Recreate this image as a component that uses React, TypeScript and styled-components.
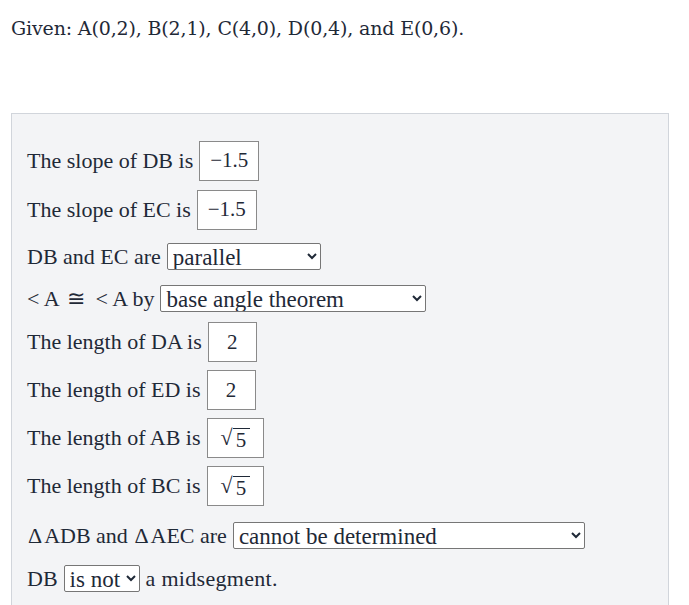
import React from "react";
import styled, { createGlobalStyle } from "styled-components";

const Global = createGlobalStyle`
  html, body { margin: 0; padding: 0; background: #ffffff; }
  body { font-family: "Liberation Serif", "DejaVu Serif", serif; color: #1f2937; }
`;

const Page = styled.div`
  padding: 14px 0 0 11px;
  width: 658px;
`;

const Title = styled.h1`
  margin: 0;
  font-family: "DejaVu Serif", "Liberation Serif", serif;
  font-weight: normal;
  font-size: 19px;
  line-height: 28px;
  color: #1f2937;
  letter-spacing: -0.15px;
`;

const Panel = styled.div`
  margin-top: 71px;
  background: #f3f4f6;
  border: 1px solid #d1d5db;
  padding: 22px 16px 20px 15px;
  height: 520px;
  box-sizing: border-box;
`;

const Row = styled.div<{ $h: number }>`
  display: flex;
  align-items: center;
  height: ${(p) => p.$h}px;
  font-size: 22px;
  white-space: nowrap;
`;

const Label = styled.span`
  margin-right: 6px;
`;

const After = styled.span`
  margin-left: 6px;
  letter-spacing: 0.3px;
`;

const Delta = styled.span`
  padding: 0 2px 0 1px;
`;

const MathBox = styled.span`
  display: inline-flex;
  align-items: center;
  justify-content: center;
  box-sizing: border-box;
  height: 40px;
  min-width: 49px;
  padding: 0 10px;
  background: #ffffff;
  border: 1px solid #8a8a8a;
  font-size: 21px;
`;

const Sqrt = styled.span`
  display: inline-flex;
  align-items: flex-start;
  padding: 0 3px;
`;

const Radical = styled.span`
  font-size: 22px;
  line-height: 1;
  margin-top: 2px;
`;

const Radicand = styled.span`
  border-top: 1.2px solid #1f2937;
  line-height: 1;
  padding: 1px 4px 0 3px;
  margin-top: 3px;
`;

const Select = styled.select<{ $w: number }>`
  width: ${(p) => p.$w}px;
  height: 27px;
  font-family: "Liberation Serif", "DejaVu Serif", serif;
  font-size: 23px;
  line-height: 25px;
  color: #1f2937;
  background: #ffffff;
  border: 1px solid #767676;
  border-radius: 2px;
  padding: 0 1px;
  margin: 0;
`;

const Cong = styled.span`
  margin: 0 11px 0 7px;
`;

const Root = () => (
  <Sqrt>
    <Radical>√</Radical>
    <Radicand>5</Radicand>
  </Sqrt>
);

export default function App() {
  return (
    <>
      <Global />
      <Page>
        <Title>Given: A(0,2), B(2,1), C(4,0), D(0,4), and E(0,6).</Title>
        <Panel>
          <Row $h={49}>
            <Label>The slope of DB is</Label>
            <MathBox>−1.5</MathBox>
          </Row>
          <Row $h={49}>
            <Label>The slope of EC is</Label>
            <MathBox>−1.5</MathBox>
          </Row>
          <Row $h={45}>
            <Label>DB and EC are</Label>
            <Select $w={154} defaultValue="parallel">
              <option value="parallel">parallel</option>
              <option value="perpendicular">perpendicular</option>
              <option value="neither">neither</option>
            </Select>
          </Row>
          <Row $h={39}>
            <span>&lt; A</span>
            <Cong>≅</Cong>
            <Label>&lt; A by</Label>
            <Select $w={266} defaultValue="base">
              <option value="base">base angle theorem</option>
              <option value="reflexive">reflexive property</option>
              <option value="vertical">vertical angles theorem</option>
            </Select>
          </Row>
          <Row $h={48}>
            <Label>The length of DA is</Label>
            <MathBox>2</MathBox>
          </Row>
          <Row $h={48}>
            <Label>The length of ED is</Label>
            <MathBox>2</MathBox>
          </Row>
          <Row $h={47}>
            <Label>The length of AB is</Label>
            <MathBox>
              <Root />
            </MathBox>
          </Row>
          <Row $h={50}>
            <Label>The length of BC is</Label>
            <MathBox>
              <Root />
            </MathBox>
          </Row>
          <Row $h={49}>
            <Label>
              <Delta>Δ</Delta>ADB and <Delta>Δ</Delta>AEC are
            </Label>
            <Select $w={352} defaultValue="cbd">
              <option value="cbd">cannot be determined</option>
              <option value="similar">similar</option>
              <option value="congruent">congruent</option>
            </Select>
          </Row>
          <Row $h={37}>
            <Label>DB</Label>
            <Select $w={76} defaultValue="isnot">
              <option value="is">is</option>
              <option value="isnot">is not</option>
            </Select>
            <After>a midsegment.</After>
          </Row>
        </Panel>
      </Page>
    </>
  );
}
